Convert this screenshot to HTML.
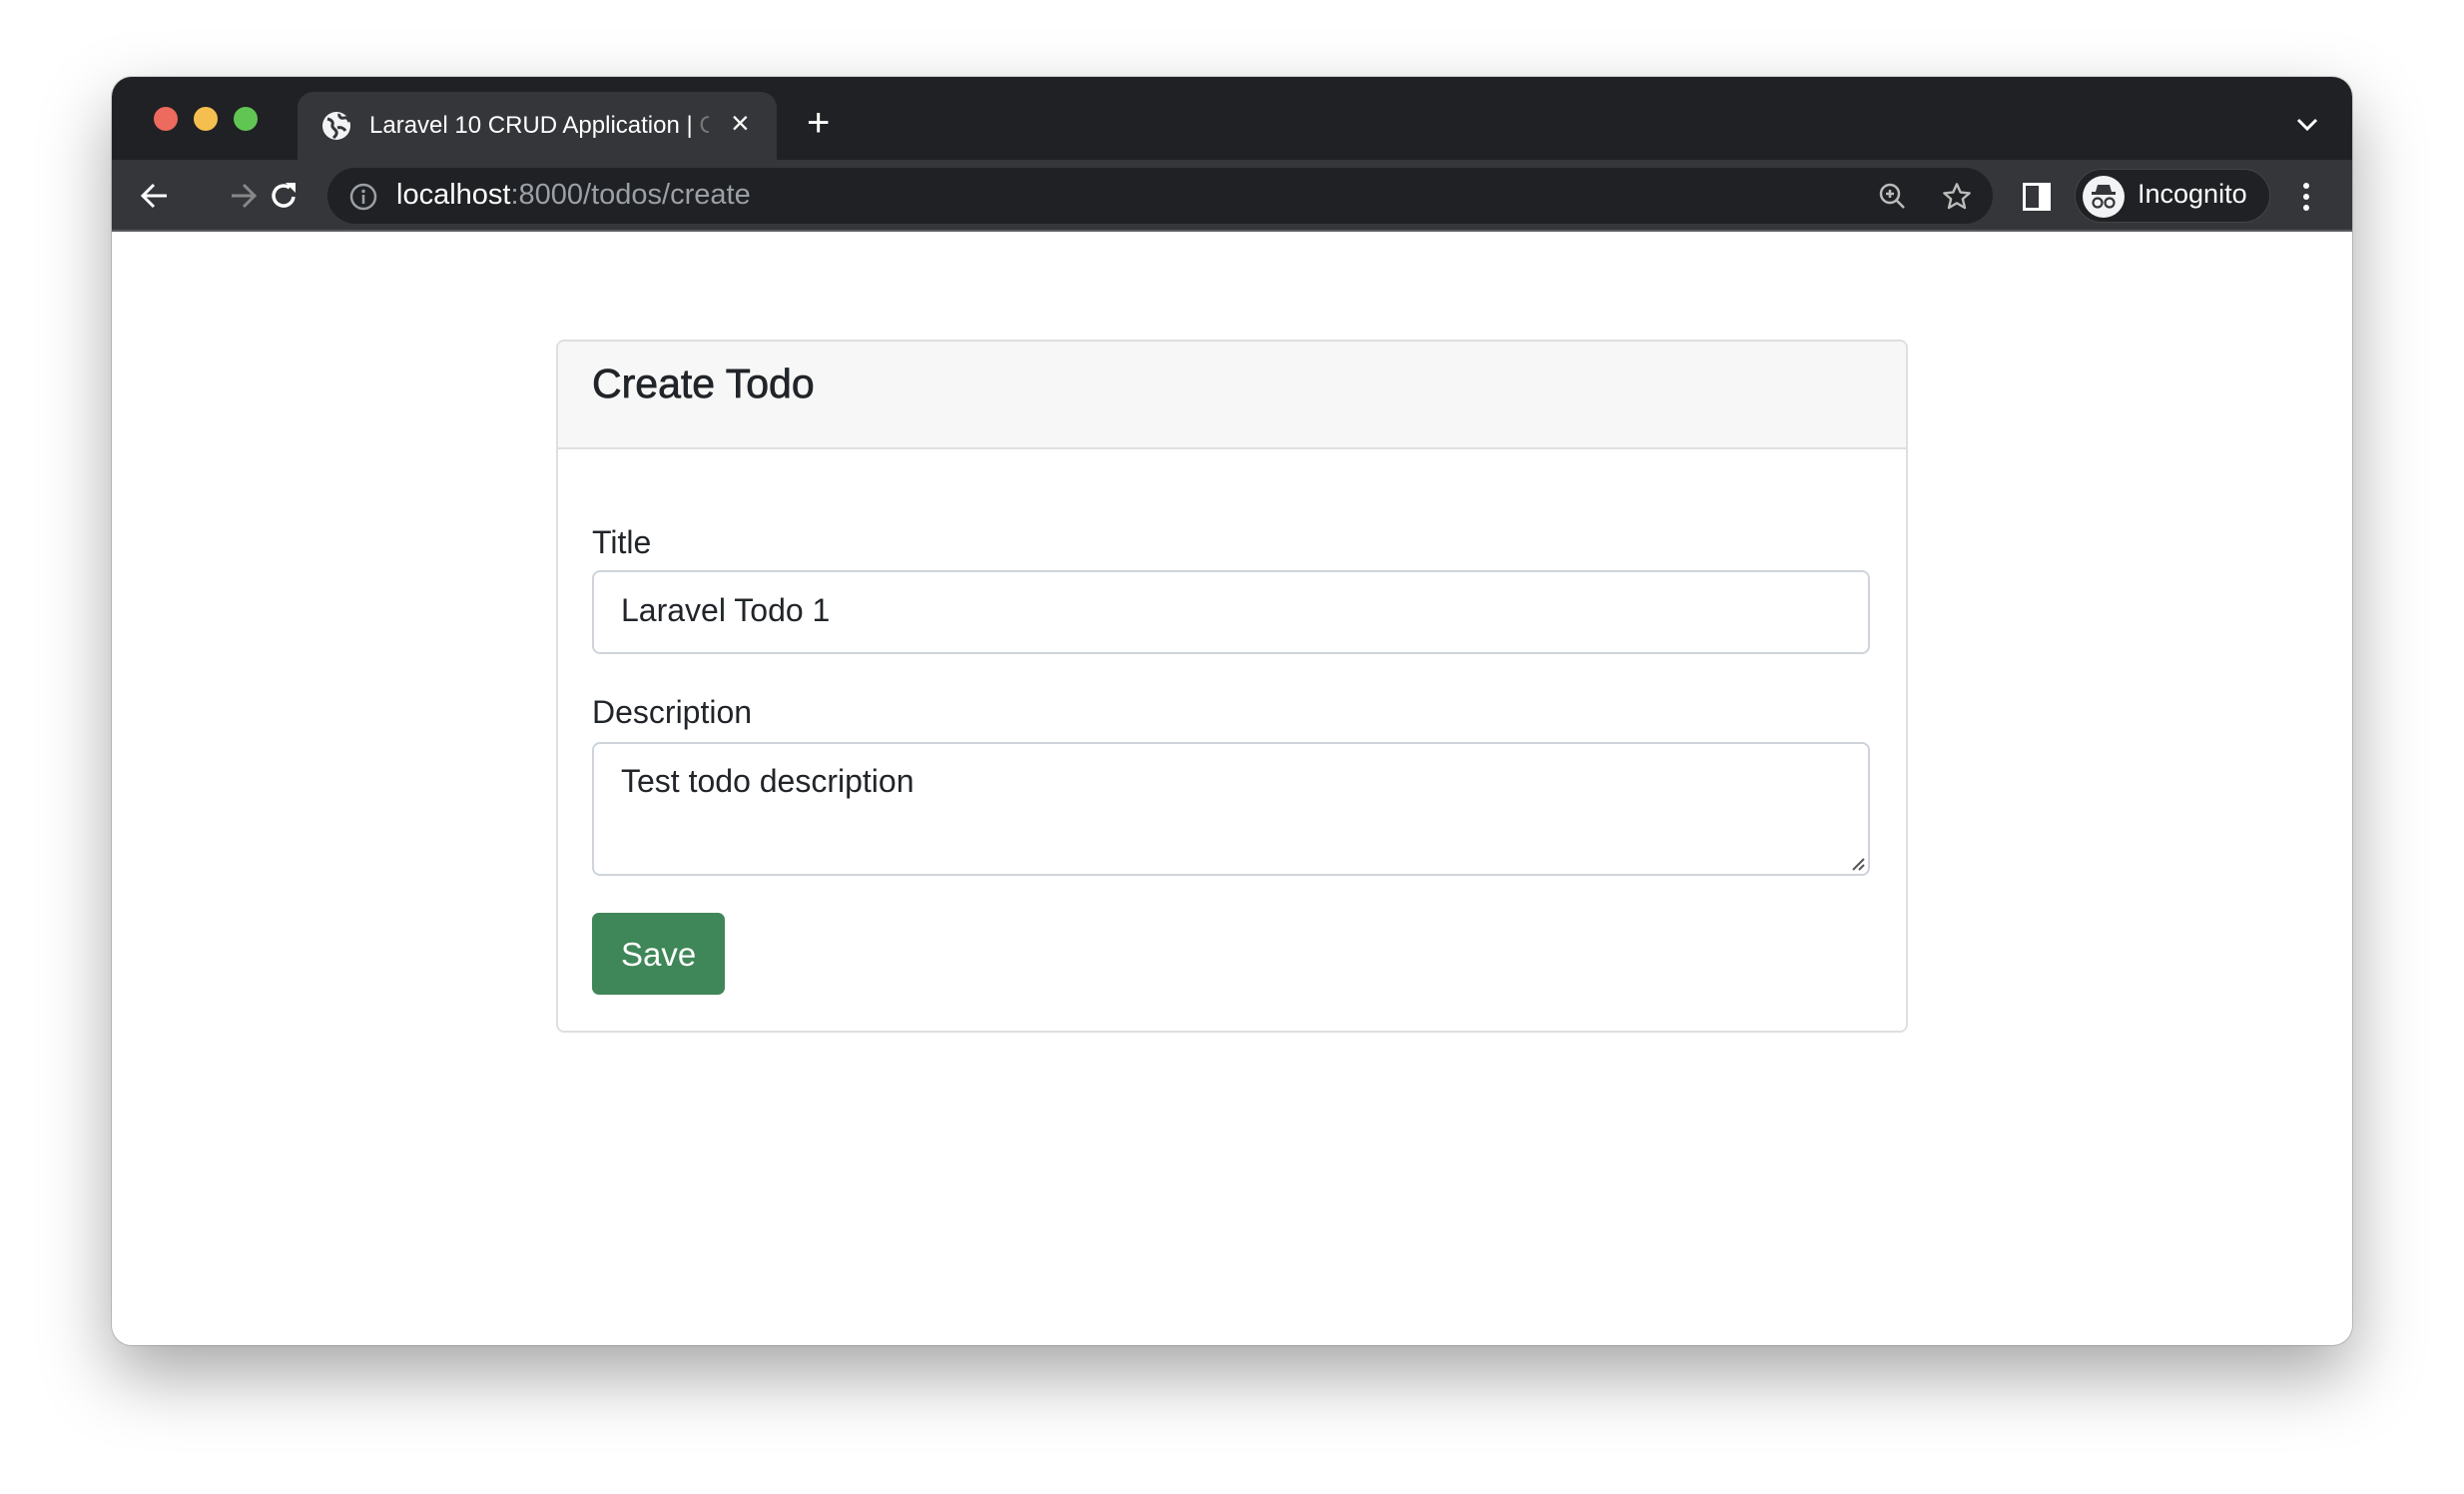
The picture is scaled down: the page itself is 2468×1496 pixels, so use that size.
<!DOCTYPE html>
<html><head><meta charset="utf-8"><style>
*{box-sizing:border-box;margin:0;padding:0}
body{width:2468px;height:1496px;background:#fff;position:relative;overflow:hidden;font-family:"Liberation Sans",sans-serif}
.abs{position:absolute}
#win{left:112px;top:77px;width:2244px;height:1270px;border-radius:20px;overflow:hidden;box-shadow:0 30px 70px rgba(0,0,0,.35),0 0 0 1px rgba(0,0,0,.15);background:#fff}
.dot{width:24px;height:24px;border-radius:50%;top:30px}
.t{color:#fff;white-space:nowrap}
.lbl{font-size:32px;color:#212529}
.inp{border:2px solid #ced4da;border-radius:8px;background:#fff}
</style></head><body>
<div id="win" class="abs">
  <div class="abs" style="left:0;top:0;width:2244px;height:83px;background:#202124"></div>
  <div class="abs dot" style="left:42px;background:#ed6a5e"></div>
  <div class="abs dot" style="left:82px;background:#f5bf4f"></div>
  <div class="abs dot" style="left:122px;background:#61c554"></div>
  <div class="abs" style="left:186px;top:15px;width:480px;height:70px;background:#35363a;border-radius:16px 16px 0 0"></div>
  <svg class="abs" style="left:210px;top:34px" width="30" height="30" viewBox="0 0 30 30"><circle cx="15" cy="15" r="14" fill="#f1f3f4"/><path d="M6 8c4 1 6 3 5 6s3 4 4 7-2 5-3 6M18 3c-1 3 2 5 5 4s4 2 5 4M16 17c3-1 6 0 8 3" stroke="#35363a" stroke-width="3" fill="none"/></svg>
  <div class="abs t" style="left:258px;top:35px;font-size:24px;width:340px;overflow:hidden">Laravel 10 CRUD Application | <span style="color:#777">C</span></div>
  <div class="abs t" style="left:620px;top:28px;font-size:32px">×</div>
  <div class="abs t" style="left:696px;top:24px;font-size:40px">+</div>
  <svg class="abs" style="left:2187px;top:40px" width="24" height="16"><path d="M3 3l9 9 9-9" stroke="#fff" stroke-width="3" fill="none"/></svg>
  <div class="abs" style="left:0;top:83px;width:2244px;height:72px;background:#35363a"></div>
  <svg class="abs" style="left:28px;top:102px" width="160" height="34" viewBox="0 0 160 34"><path d="M27 17H4M14 6L3 17l11 11" stroke="#fff" stroke-width="3" fill="none"/><path d="M92 17h23M104 6l11 11-11 11" stroke="#888" stroke-width="3" fill="none"/></svg>
  <svg class="abs" style="left:156px;top:103px" width="32" height="32" viewBox="0 0 32 32"><path d="M26 17a10 10 0 1 1-4-9" stroke="#fff" stroke-width="3.5" fill="none"/><path d="M18 3h10v10z" fill="#fff"/></svg>
  <div class="abs" style="left:216px;top:91px;width:1668px;height:56px;border-radius:28px;background:#202124"></div>
  <svg class="abs" style="left:238px;top:106px" width="28" height="28"><circle cx="14" cy="14" r="12" stroke="#9aa0a6" stroke-width="2.5" fill="none"/><rect x="12.7" y="12" width="2.6" height="9" fill="#9aa0a6"/><circle cx="14" cy="8.5" r="1.7" fill="#9aa0a6"/></svg>
  <div class="abs t" style="left:285px;top:102px;font-size:29px">localhost<span style="color:#9aa0a6">:8000/todos/create</span></div>
  <svg class="abs" style="left:1768px;top:104px" width="32" height="32"><circle cx="13" cy="13" r="9" stroke="#bbb" stroke-width="2.5" fill="none"/><path d="M19.5 19.5L27 27M13 9v8M9 13h8" stroke="#bbb" stroke-width="2.5"/></svg>
  <svg class="abs" style="left:1832px;top:104px" width="32" height="32" viewBox="0 0 24 24"><path d="M12 2.5l2.8 6.2 6.7.6-5.1 4.4 1.6 6.6L12 16.8l-6 3.5 1.6-6.6-5.1-4.4 6.7-.6z" stroke="#bbb" stroke-width="1.8" fill="none" stroke-linejoin="round"/></svg>
  <div class="abs" style="left:1914px;top:106px;width:28px;height:28px;border:3px solid #fff;border-right-width:12px"></div>
  <div class="abs" style="left:1966px;top:92px;width:196px;height:54px;border-radius:27px;background:#202124;border:1px solid #444"></div>
  <div class="abs" style="left:1974px;top:99px;width:42px;height:42px;border-radius:50%;background:#f1f3f4"></div>
  <svg class="abs" style="left:1978px;top:104px" width="34" height="32" viewBox="0 0 34 32"><path d="M11 4h12l2 7H9z" fill="#35363a"/><rect x="5" y="11" width="24" height="3" fill="#35363a"/><circle cx="11" cy="22" r="4.5" stroke="#35363a" stroke-width="2.2" fill="none"/><circle cx="23" cy="22" r="4.5" stroke="#35363a" stroke-width="2.2" fill="none"/></svg>
  <div class="abs t" style="left:2029px;top:102px;font-size:27px">Incognito</div>
  <svg class="abs" style="left:2190px;top:104px" width="16" height="32"><circle cx="8" cy="5" r="3" fill="#fff"/><circle cx="8" cy="16" r="3" fill="#fff"/><circle cx="8" cy="27" r="3" fill="#fff"/></svg>
  <div class="abs" style="left:0;top:153px;width:2244px;height:2px;background:#5a5b5f"></div>

  <div class="abs" style="left:445px;top:263px;width:1354px;height:694px;border:2px solid #dfdfdf;border-radius:8px;overflow:hidden">
    <div style="height:108px;background:#f7f7f7;border-bottom:2px solid #dfdfdf"></div>
  </div>
  <div class="abs" style="left:481px;top:284px;font-size:41px;color:#212529;-webkit-text-stroke:0.7px #212529">Create Todo</div>
  <div class="abs lbl" style="left:481px;top:448px">Title</div>
  <div class="abs inp" style="left:481px;top:494px;width:1280px;height:84px"></div>
  <div class="abs lbl" style="left:510px;top:516px">Laravel Todo 1</div>
  <div class="abs lbl" style="left:481px;top:618px">Description</div>
  <div class="abs inp" style="left:481px;top:666px;width:1280px;height:134px"></div>
  <div class="abs lbl" style="left:510px;top:687px">Test todo description</div>
  <svg class="abs" style="left:1742px;top:781px" width="14" height="14"><path d="M2 13L13 2M8 13l5-5" stroke="#555" stroke-width="2"/></svg>
  <div class="abs" style="left:481px;top:837px;width:133px;height:82px;background:#3f8658;border-radius:7px"></div>
  <div class="abs t" style="left:510px;top:860px;font-size:33px">Save</div>
</div>
</body></html>
